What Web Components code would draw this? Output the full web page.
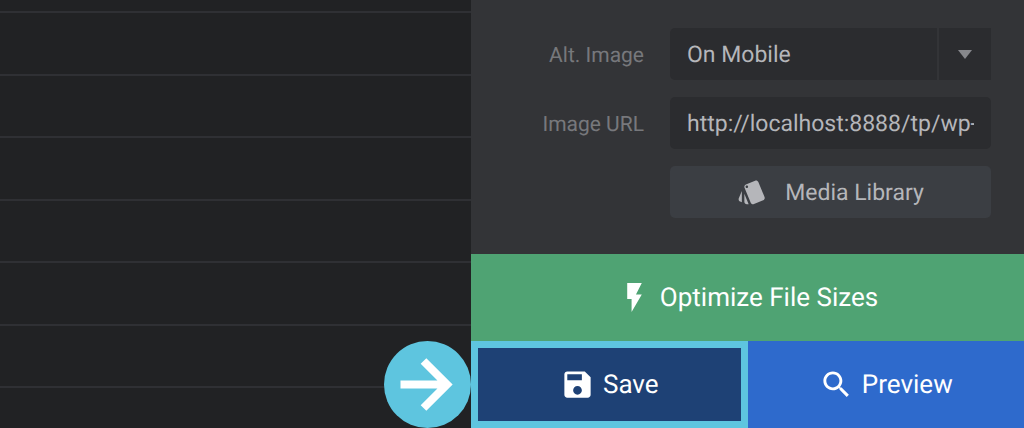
<!DOCTYPE html>
<html lang="en">
<head>
<meta charset="utf-8">
<meta name="viewport" content="width=device-width, initial-scale=1">
<title>Layer settings</title>
<style>
  :root{
    --bg:#212224; --line:#2f3034; --panel:#333437; --field:#2b2c2f; --button:#3b3e43;
    --label:#77787c; --text:#b5b6ba;
    --green:#4fa373; --blue:#2e6acc; --navy:#1e4175; --cyan:#5ec5df;
  }
  body{
    margin:0; background:var(--bg); color:var(--text);
    font-family:Roboto, "Liberation Sans", sans-serif; text-rendering:geometricPrecision;
  }
</style>
</head>
<body>
<editor-shell>
  <track-list slot="tracks"></track-list>
  <settings-form>
    <select-field label="Alt. Image" options="On Mobile,On Tablet,Always,Off"></select-field>
    <text-field label="Image URL" value="http://localhost:8888/tp/wp-content/uploads/image.jpg"></text-field>
    <media-button>Media Library</media-button>
  </settings-form>
  <action-bar>
    <action-button slot="top" icon="bolt" tone="green">Optimize File Sizes</action-button>
    <action-button icon="save" tone="navy" marked>Save</action-button>
    <action-button icon="search" tone="blue">Preview</action-button>
  </action-bar>
</editor-shell>

<script>
(function () {
  const ICONS = {
    style: 'M2.53 19.65l1.34.56v-9.03l-2.43 5.86c-.41 1.02.08 2.19 1.09 2.61zm19.5-3.7L17.07 3.98c-.31-.75-1.04-1.21-1.81-1.23-.26 0-.53.04-.79.15L7.1 5.95c-.75.31-1.21 1.03-1.23 1.8-.01.27.04.54.15.8l4.96 11.97c.31.76 1.05 1.22 1.83 1.23.26 0 .52-.05.77-.15l7.36-3.05c1.02-.42 1.51-1.59 1.09-2.6zM7.88 8.75c-.55 0-1-.45-1-1s.45-1 1-1 1 .45 1 1-.45 1-1 1zm-2 11c0 1.1.9 2 2 2h1.45l-3.45-8.34v6.34z',
    bolt: 'M7 2v11h3v9l7-12h-4l4-8z',
    save: 'M17 3H5c-1.11 0-2 .9-2 2v14c0 1.1.89 2 2 2h14c1.1 0 2-.9 2-2V7l-4-4zm-5 16c-1.66 0-3-1.34-3-3s1.34-3 3-3 3 1.34 3 3-1.34 3-3 3zm3-10H5V5h10v4z',
    search: 'M15.5 14h-.79l-.28-.27C15.41 12.59 16 11.11 16 9.5 16 5.91 13.09 3 9.5 3S3 5.91 3 9.5 5.91 16 9.5 16c1.61 0 3.09-.59 4.23-1.57l.27.28v.79l5 4.99L20.49 19l-4.99-5zm-6 0C7.01 14 5 11.99 5 9.5S7.01 5 9.5 5 14 7.01 14 9.5 11.99 14 9.5 14z'
  };
  const icon = (name) => `<svg viewBox="0 0 24 24" aria-hidden="true"><path d="${ICONS[name]}"/></svg>`;

  // ---- page frame ----
  class EditorShell extends HTMLElement {
    constructor() {
      super();
      this.attachShadow({ mode: 'open' }).innerHTML = `
        <style>
          :host{ display:grid; grid-template-columns:471fr 553fr; min-height:100vh; }
          main{ display:flex; flex-direction:column; min-width:0; background:var(--panel); }
        </style>
        <slot name="tracks"></slot>
        <main><slot></slot></main>
      `;
    }
  }

  class TrackList extends HTMLElement {
    constructor() {
      super();
      this.attachShadow({ mode: 'open' }).innerHTML = `
        <style>
          :host{ display:grid; grid-template-rows:13px repeat(6, 1fr) 40px; }
          div{ border-bottom:2px solid var(--line); }
          div:last-child{ border:0; }
        </style>
        ${'<div></div>'.repeat(8)}
      `;
    }
  }

  // ---- settings ----
  const ROW = `
    :host{ display:grid; grid-template-columns:minmax(0, 173px) minmax(0, 1fr); column-gap:26px; align-items:center; }
    label{ padding-top:3px; text-align:right; font-size:21px; line-height:26px; color:var(--label); }
    select, input, button{
      box-sizing:border-box; width:100%; height:52px; margin:0; padding:0 17px;
      border:0; border-radius:5px; outline:0; appearance:none; text-rendering:inherit;
      background:var(--field); color:var(--text); font:inherit; font-size:23px;
    }
  `;

  class SettingsForm extends HTMLElement {
    constructor() {
      super();
      this.attachShadow({ mode: 'open' }).innerHTML = `
        <style>
          :host{ display:block; flex:1; }
          form{ display:flex; flex-direction:column; gap:17px; padding:28px 33px 35px 0; }
        </style>
        <form><slot></slot></form>
      `;
    }
  }

  class SelectField extends HTMLElement {
    connectedCallback() {
      const options = this.getAttribute('options').split(',');
      this.attachShadow({ mode: 'open' }).innerHTML = `
        <style>
          ${ROW}
          .box{ position:relative; }
          select{ border-radius:5px 0 0 5px; }
          .arrow{
            position:absolute; top:0; right:0; bottom:0; box-sizing:border-box; width:54px;
            display:flex; align-items:center; justify-content:center;
            border-left:2px solid var(--panel); pointer-events:none;
          }
          svg{ width:14px; height:9px; fill:#87888c; }
        </style>
        <label for="control">${this.getAttribute('label')}</label>
        <div class="box">
          <select id="control">${options.map(o => `<option>${o}</option>`).join('')}</select>
          <span class="arrow"><svg viewBox="0 0 14 9" aria-hidden="true"><path d="M0 0h14L7 9z"/></svg></span>
        </div>
      `;
    }
  }

  class TextField extends HTMLElement {
    connectedCallback() {
      this.attachShadow({ mode: 'open' }).innerHTML = `
        <style>${ROW}</style>
        <label for="control">${this.getAttribute('label')}</label>
        <input id="control" type="text" value="${this.getAttribute('value')}">
      `;
    }
  }

  class MediaButton extends HTMLElement {
    constructor() {
      super();
      this.attachShadow({ mode: 'open' }).innerHTML = `
        <style>
          ${ROW}
          button{
            grid-column:2; display:flex; align-items:center; justify-content:center; gap:18px;
            background:var(--button); cursor:pointer;
          }
          svg{ width:30px; height:30px; fill:currentColor; }
        </style>
        <button type="button">${icon('style')}<span><slot></slot></span></button>
      `;
    }
  }

  // ---- bottom actions ----
  class ActionBar extends HTMLElement {
    constructor() {
      super();
      this.attachShadow({ mode: 'open' }).innerHTML = `
        <style>
          :host{ display:block; }
          .pair{ display:grid; grid-template-columns:1fr 1fr; }
        </style>
        <slot name="top"></slot>
        <div class="pair"><slot></slot></div>
      `;
    }
  }

  class ActionButton extends HTMLElement {
    connectedCallback() {
      const marked = this.hasAttribute('marked');
      this.attachShadow({ mode: 'open' }).innerHTML = `
        <style>
          :host{ display:block; position:relative; }
          button{
            box-sizing:border-box; width:100%; height:87px; padding:0; border:0;
            display:flex; align-items:center; justify-content:center; gap:8px; text-rendering:inherit;
            background:var(--${this.getAttribute('tone')}); color:#fff; font:inherit; font-size:26px; cursor:pointer;
          }
          :host([marked]) button{ border:7px solid var(--cyan); }
          button svg{ width:35px; height:35px; fill:currentColor; }
          .pointer{ position:absolute; top:0; right:100%; width:87px; height:87px; }
        </style>
        <button type="button">${icon(this.getAttribute('icon'))}<span><slot></slot></span></button>
        ${marked ? `
        <svg class="pointer" viewBox="0 0 87 87" aria-hidden="true">
          <circle cx="43.5" cy="43.5" r="43.5" fill="#5ec5df"/>
          <path d="M16.5 43.5H63M39.5 20L63 43.5L39.5 67" fill="none" stroke="#fff" stroke-width="8"/>
        </svg>` : ''}
      `;
    }
  }

  customElements.define('editor-shell', EditorShell);
  customElements.define('track-list', TrackList);
  customElements.define('settings-form', SettingsForm);
  customElements.define('select-field', SelectField);
  customElements.define('text-field', TextField);
  customElements.define('media-button', MediaButton);
  customElements.define('action-bar', ActionBar);
  customElements.define('action-button', ActionButton);
})();
</script>
</body>
</html>
